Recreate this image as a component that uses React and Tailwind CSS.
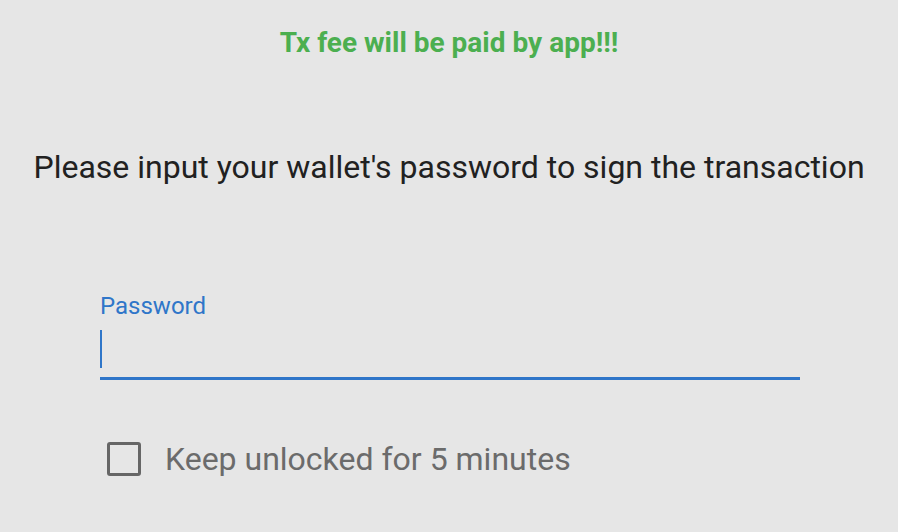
import React from "react";

const App = () => {
  return (
    <div
      className="w-[898px] h-[532px] bg-[#e6e6e6] flex flex-col overflow-hidden"
      style={{ fontFamily: "Roboto, 'Noto Sans', sans-serif" }}
    >
      {/* fee notice */}
      <div className="pt-[27px] text-center text-[28px] leading-[32px] font-bold text-[#4caf50]">
        Tx fee will be paid by app!!!
      </div>

      {/* prompt */}
      <div className="mt-[89px] text-center text-[32px] leading-[38px] text-[#212121]">
        Please input your wallet's password to sign the transaction
      </div>

      {/* password field */}
      <div className="mt-[106px] pl-[100px] pr-[98px]">
        <label className="block text-[24px] leading-[28px] text-[#2f76c9]">Password</label>
        <div className="mt-[10px] h-[50px] border-b-[3px] border-[#2f76c9] flex items-start">
          <div className="w-[2px] h-[38px] bg-[#2f76c9]" />
        </div>
      </div>

      {/* keep unlocked */}
      <div className="mt-[60px] pl-[107px] flex items-center gap-[24px]">
        <div className="w-[34px] h-[34px] border-[3px] border-[#666666] rounded-[3px]" />
        <span className="text-[32px] leading-[38px] text-[#6b6b6b]">Keep unlocked for 5 minutes</span>
      </div>
    </div>
  );
};

export default App;
